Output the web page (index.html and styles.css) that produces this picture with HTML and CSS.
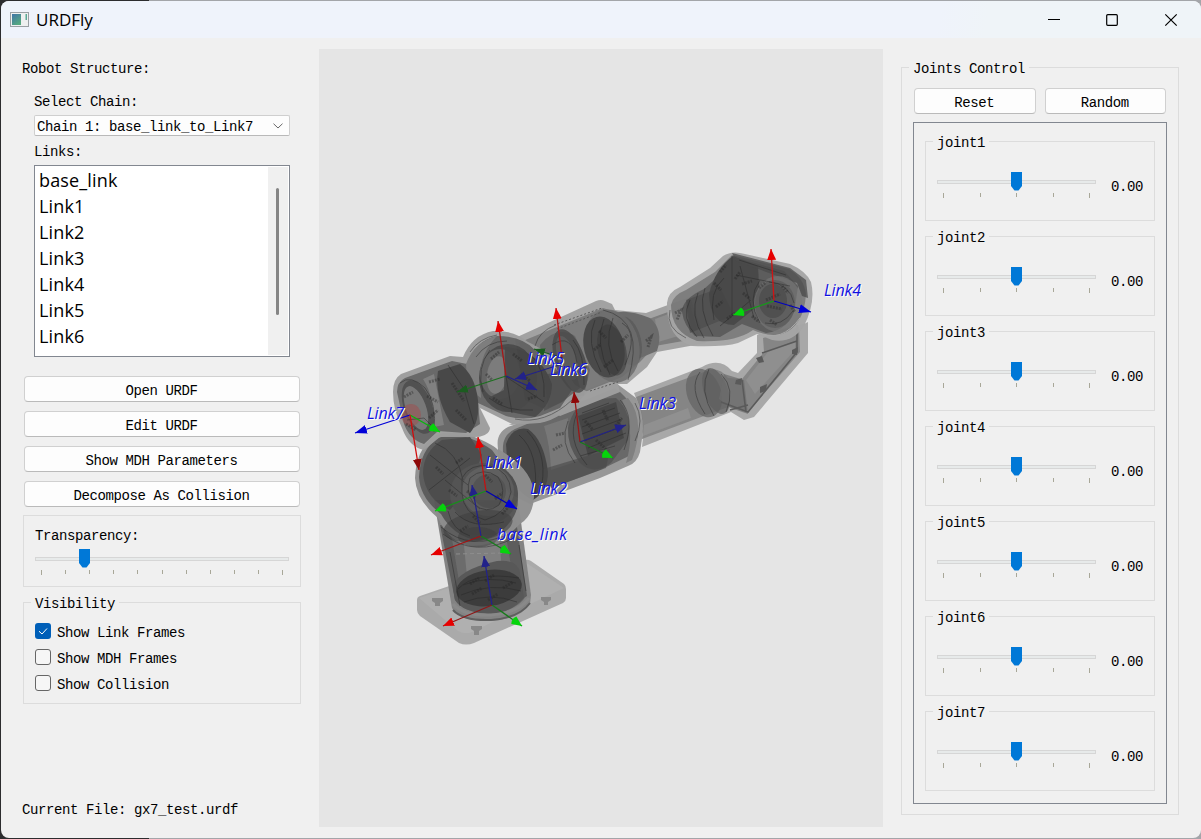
FILE: index.html
```html
<!DOCTYPE html>
<html lang="en">
  <head>
    <meta charset="UTF-8" />
    <meta name="viewport" content="width=device-width, initial-scale=1.0" />
    <title>URDFly</title>
    <link rel="stylesheet" href="styles.css">
  </head>
  <body>
    <div class="window">
      <header class="titlebar">
        <svg class="app-icon" width="19" height="15" viewBox="0 0 19 15">
          <defs>
            <linearGradient id="iconFill" x1="0" y1="0" x2="0.6" y2="1">
              <stop offset="0" stop-color="#3f74a8" />
              <stop offset="1" stop-color="#55a980" />
            </linearGradient>
          </defs>
          <rect x="0.5" y="0.5" width="18" height="14" fill="#eef0f0" stroke="#9aa0a4" />
          <rect x="2" y="2" width="9" height="11" fill="url(#iconFill)" />
          <rect x="15.5" y="2" width="1.5" height="6" fill="#5aa895" />
        </svg>
        <span class="title">URDFly</span>
        <svg class="window-buttons" width="130" height="14" viewBox="0 0 130 14">
          <path d="M0 6.5H12" />
          <rect x="58.7" y="1.7" width="10.6" height="10.6" rx="1" />
          <path d="M117.3 1.3L128.7 12.7M128.7 1.3L117.3 12.7" />
        </svg>
      </header>

      <main>
        <aside class="left">
          <div class="label">Robot Structure:</div>
          <div class="structure">
            <div class="label chain-label">Select Chain:</div>
            <div class="combo">
              <span>Chain 1: base_link_to_Link7</span>
              <svg width="10" height="6" viewBox="0 0 10 6"><path d="M0.5 0.7L5 5L9.5 0.7" /></svg>
            </div>
            <div class="label links-label">Links:</div>
            <div class="list">
              <ul>
                <li>base_link</li>
                <li>Link1</li>
                <li>Link2</li>
                <li>Link3</li>
                <li>Link4</li>
                <li>Link5</li>
                <li>Link6</li>
              </ul>
              <div class="scrollbar"><div class="thumb"></div></div>
            </div>
          </div>

          <div class="actions">
            <button>Open URDF</button>
            <button>Edit URDF</button>
            <button>Show MDH Parameters</button>
            <button>Decompose As Collision</button>
          </div>

          <div class="transparency">
            <div class="label">Transparency:</div>
            <svg class="slider" width="254" height="26" viewBox="0 0 254 26">
              <rect class="track" x="0.5" y="8.5" width="253" height="3" />
              <path class="ticks" d="M6.5 21v5M30.5 21v4M54.5 21v4M78.5 21v4M102.5 21v4M127.5 21v4M151.5 21v4M175.5 21v4M199.5 21v4M223.5 21v4M247.5 21v5" />
              <path class="handle" d="M44 0h11v14l-3.5 4.5h-4L44 14z" />
            </svg>
          </div>

          <fieldset class="visibility">
            <legend>Visibility</legend>
            <label><span class="check on"><svg width="16" height="16" viewBox="0 0 16 16"><path d="M4 8.2L7 11L12 5.5" /></svg></span><span class="check-text">Show Link Frames</span></label>
            <label><span class="check"></span><span class="check-text">Show MDH Frames</span></label>
            <label><span class="check"></span><span class="check-text">Show Collision</span></label>
          </fieldset>

          <div class="label current-file">Current File: gx7_test.urdf</div>
        </aside>

        <svg class="viewport" width="564" height="778" viewBox="319 49 564 778">
          <defs>
            <marker id="red" viewBox="0 0 11 10" refX="11" refY="5" markerWidth="11" markerHeight="10" markerUnits="userSpaceOnUse" orient="auto"><path d="M0 0.5L11 5L0 9.5z" fill="#e60000" /></marker>
            <marker id="maroon" viewBox="0 0 11 10" refX="11" refY="5" markerWidth="11" markerHeight="10" markerUnits="userSpaceOnUse" orient="auto"><path d="M0 0.5L11 5L0 9.5z" fill="#8e0808" /></marker>
            <marker id="lime" viewBox="0 0 12 10" refX="12" refY="5" markerWidth="12" markerHeight="10" markerUnits="userSpaceOnUse" orient="auto"><path d="M2 0.5Q-1 5 2 9.5L12 5z" fill="#06d40c" /></marker>
            <marker id="green" viewBox="0 0 11 10" refX="11" refY="5" markerWidth="11" markerHeight="10" markerUnits="userSpaceOnUse" orient="auto"><path d="M0 1L11 5L0 9z" fill="#1c5c20" /></marker>
            <marker id="blue" viewBox="0 0 12 10" refX="12" refY="5" markerWidth="12" markerHeight="10" markerUnits="userSpaceOnUse" orient="auto"><path d="M0 0.5L12 5L0 9.5z" fill="#0000d8" /></marker>
            <marker id="navy" viewBox="0 0 11 10" refX="11" refY="5" markerWidth="11" markerHeight="10" markerUnits="userSpaceOnUse" orient="auto"><path d="M0 0.5L11 5L0 9.5z" fill="#22228a" /></marker>
          </defs>

          <!-- base plate and column -->
          <g class="solid">
            <path fill="#a8a8a8" d="M417 600Q417 597 420 596L525 560Q528 559 531 561L564 584Q566 586 566 589V598Q566 601 563 603L474 643Q466 646 459 643L420 616Q417 613 417 610z" />
            <path fill="#bababa" d="M419 598L525 562L564 588L472 632Q465 635 458 631z" opacity="0.35" />
            <g fill="#858585">
              <path d="M432 598h11v3l-3 2v3h-5v-3l-3-2z" />
              <path d="M541 597h10v3l-3 2v3h-4v-3l-3-2z" />
              <path d="M471 626h11v3l-3 2v4h-5v-4l-3-2z" />
            </g>
            <path fill="#808080" d="M434 500L452 608Q458 621 491 621Q520 619 530 604L531 595L518 500z" />
            <path fill="#686868" d="M440 505L455 600Q464 613 490 613Q518 611 526 596L513 500z" />
            <path fill="#7b7b7b" d="M463 535L470 608L505 607L499 535z" />
            <path fill="#585858" d="M505 530L517 602L527 596L516 520zM440 525L455 600L463 605L450 527z" />
            <path fill="#535353" d="M453 588Q456 570 497 561Q518 559 520 573L524 598Q510 614 488 614Q462 612 455 600z" />
            <ellipse fill="#363636" cx="489" cy="588" rx="33" ry="18" transform="rotate(-8 489 588)" />
            <path fill="none" stroke="#868686" stroke-width="3" d="M453 604Q463 616 491 615Q519 613 529 598" />
            <path fill="none" stroke="#5a5a5a" stroke-width="2" d="M453 610Q463 621 491 620Q519 618 530 603" />
          </g>

          <!-- upper arm housing -->
          <g class="solid">
            <path fill="#949494" d="M497 447Q497 432 508 427L560 408L580 392L612 380L636 398Q645 410 643 432L640 452Q637 463 628 466L600 478L530 504L510 494Q500 482 497 447z" />
            <path fill="#646464" d="M503 446Q504 434 515 429L580 402L615 388Q638 404 638 436L631 455L600 470L530 496L512 484Q502 470 503 446z" />
            <path fill="#7c7c7c" d="M628 398Q646 420 632 460L626 463Q636 430 622 400z" />
            <path fill="#404040" d="M506 444Q512 426 528 429Q544 440 548 472Q548 491 533 500Q516 492 508 472z" />
            <path fill="#747474" d="M544 426L568 418Q566 440 578 461L551 470Q550 445 544 426z" />
            <path fill="#525252" d="M568 428Q573 404 594 399L616 398Q633 412 628 440L611 463Q594 476 580 463Q567 446 568 428z" />
            <path fill="#3a3a3a" d="M578 416L616 402L624 438L588 456z" opacity="0.75" />
            <path fill="#424242" d="M540 470L610 449L606 468L535 494z" opacity="0.6" />
          </g>

          <!-- shoulder -->
          <g class="solid">
            <path fill="#8e8e8e" d="M415 478Q416 450 434 436Q460 425 498 449Q535 470 534 497Q533 516 520 524Q500 546 470 546Q448 541 438 518Q416 500 415 478z" />
            <path fill="#585858" d="M419 477Q420 450 438 438Q462 429 492 450L516 484Q522 508 510 522Q496 541 474 540Q452 534 441 514Q420 498 419 477z" />
            <path fill="#474747" d="M423 474Q423 452 442 440L470 437L482 455L470 486L450 510Q426 500 423 474z" />
            <ellipse fill="#4f4f4f" cx="484" cy="494" rx="34" ry="31" />
            <ellipse fill="#646464" cx="488" cy="491" rx="26" ry="25" opacity="0.6" />
            <ellipse fill="#4a4a4a" cx="489" cy="491" rx="17" ry="17" opacity="0.7" />
            <ellipse fill="#3f3f3f" cx="478" cy="526" rx="35" ry="15" opacity="0.6" transform="rotate(-10 478 526)" />
            <ellipse fill="#3b3b3b" cx="478" cy="537" rx="20" ry="10" opacity="0.5" />
            <path fill="none" stroke="#8f8f8f" stroke-dasharray="4 3" d="M456 554L502 553" />
          </g>

          <!-- lower tube and elbow bracket -->
          <g class="solid">
            <path fill="#a6a6a6" d="M634 393L702 367Q720 357 732 371L738 373L757 353V335L804 324L808 322V353L754 417L744 420L731 412L642 447Q646 420 634 393z" />
            <path fill="#828282" d="M636 397L704 372Q718 365 728 378L742 379L764 352L763 338L799 327L800 352L749 411L728 407L642 439Q645 418 636 397z" />
            <path fill="#8d8d8d" d="M644 425L688 408L691 418L643 436z" />
            <ellipse fill="#606060" cx="704" cy="393" rx="17" ry="25" transform="rotate(-20 704 393)" opacity="0.75" />
            <ellipse fill="#585858" cx="716" cy="391" rx="12" ry="24" transform="rotate(-20 716 391)" opacity="0.7" />
            <path fill="#686868" d="M724 374L744 380L748 414L731 408L719 399z" opacity="0.7" />
            <path fill="#8c8c8c" d="M746 380L768 352L795 342V350L755 394z" />
            <path fill="none" stroke="#555" d="M721 402L748 412L797 352V325M762 353L797 341M742 380L746 412M730 410L748 405" stroke-width="1.6" />
            <path fill="#555" d="M756 358l6-2 2 6-5 1zM760 387l7-3-1 7-6 2zM792 350l6-3-1 8-5-1zM736 380l6-2-1 7-6-1z" />
          </g>

          <!-- forearm tube -->
          <g class="solid">
            <path fill="#a0a0a0" d="M515 338L596 301Q601 299 605 301L612 304L615 310L646 313L690 297L706 343L657 352L647 367L627 384L618 384L620 392L560 416L525 400z" />
            <path fill="#787878" d="M518 343L603 308L625 315L646 320L690 304L700 338L655 346L640 362L622 377L560 402z" />
            <path fill="#898989" d="M655 319L687 307L692 332L658 342z" />
            <path fill="#636363" d="M540 345Q556 325 575 336L590 370L584 395L548 408z" />
            <path fill="#676767" d="M612 314Q625 308 650 318Q664 330 657 351L628 363L612 372z" />
            <ellipse fill="#4e4e4e" cx="628" cy="341" rx="13" ry="25" opacity="0.6" transform="rotate(-14 628 341)" />
            <ellipse fill="#686868" cx="612" cy="346" rx="27" ry="37" transform="rotate(-14 612 346)" opacity="0.85" />
            <ellipse fill="#444" cx="604" cy="347" rx="20" ry="31" transform="rotate(-14 604 347)" />
            <ellipse fill="#363636" cx="612" cy="350" rx="14" ry="26" transform="rotate(-14 612 350)" opacity="0.6" />
            <path fill="none" stroke="#555" stroke-dasharray="2 2" d="M554 325L602 308M557 329L602 312M590 391L618 382" />
          </g>

          <!-- elbow head -->
          <g class="solid">
            <path fill="#a6a6a6" d="M667 303Q668 292 680 287L710 268L723 256Q732 250 745 254L790 264Q806 271 811 282Q816 302 804 326Q792 344 772 340L757 334L738 343Q725 347 692 346Q666 338 667 303z" />
            <path fill="#7a7a7a" d="M671 305Q673 295 686 290L715 272L732 255L789 269Q804 278 806 294Q804 326 782 334Q768 337 753 330Q735 343 697 341Q671 332 671 305z" />
            <path fill="#585858" d="M682 312Q682 299 704 289L722 273L733 257L784 271L798 286L795 307Q790 330 766 333L742 324L720 337L695 336Q684 326 682 312z" />
            <path fill="#434343" d="M709 294Q715 269 733 256L758 266L760 304L734 325Q710 325 709 294z" />
            <path fill="#3e3e3e" d="M686 300L720 288L734 315L690 333z" opacity="0.5" />
            <path fill="#444" d="M732 253L790 268L806 280L808 298L802 296L797 283L736 261z" opacity="0.75" />
            <ellipse fill="#767676" cx="778" cy="304" rx="24" ry="28" opacity="0.6" />
            <ellipse fill="#565656" cx="775" cy="304" rx="20" ry="24" opacity="0.8" />
            <ellipse fill="#404040" cx="773" cy="301" rx="14" ry="17" opacity="0.6" />
            <path fill="none" stroke="#a9a9a9" d="M758 333Q782 343 800 318" />
            <path fill="none" stroke="#303030" d="M732 256V316" opacity="0.7" />
          </g>

          <!-- wrist -->
          <g class="solid">
            <path fill="#9d9d9d" d="M393 392Q393 379 401 374L450 356L463 357Q472 335 493 331Q514 330 528 342Q556 354 575 385L588 392Q560 420 540 423L510 425L478 409L490 412L490 430Q486 438 471 437L440 437L424 450Q409 447 402 428Q393 410 393 392z" />
            <path fill="#646464" d="M397 392Q397 382 405 378L452 361L467 364Q476 340 497 336Q522 336 535 350Q556 365 572 390L560 408L540 416Q523 421 506 416L478 403L480 424L466 433L438 431L424 444Q410 440 404 424z" />
            <path fill="#7a7a7a" d="M466 364Q474 342 497 336Q481 352 480 375L481 398L467 388z" />
            <path fill="#7c7c7c" d="M423 379L434 374L444 425L434 427Q435 398 423 379z" />
            <ellipse fill="#4b4b4b" cx="418" cy="407" rx="14" ry="28" transform="rotate(-20 418 407)" />
            <ellipse fill="#747474" cx="416" cy="408" rx="10" ry="23" transform="rotate(-20 416 408)" />
            <path fill="#424242" d="M438 371L460 364Q475 375 478 400Q480 421 470 433L450 422Q434 395 438 371z" />
            <ellipse fill="#464646" cx="508" cy="378" rx="29" ry="34" />
            <ellipse fill="#606060" cx="500" cy="374" rx="20" ry="25" />
            <ellipse fill="#787878" cx="497" cy="375" rx="10" ry="19" transform="rotate(8 497 375)" />
            <path fill="#424242" d="M505 347Q540 350 552 384Q552 404 535 417L505 411L490 397L504 390z" opacity="0.9" />
            <ellipse fill="#474747" cx="570" cy="361" rx="15" ry="33" transform="rotate(-18 570 361)" opacity="0.8" />
            <ellipse fill="#606060" cx="567" cy="358" rx="9" ry="23" transform="rotate(-18 567 358)" opacity="0.8" />
            <path fill="#464646" d="M545 375L574 367L580 388L562 402L544 411z" opacity="0.6" />
            <ellipse fill="#a04646" cx="411" cy="415" rx="10" ry="11" opacity="0.5" />
          </g>

          <path fill="#e5e5e5" d="M480 408L512 424Q498 427 497 437L498 450Q490 441 480 437Q490 436 490 428z" />

          <!-- mesh edges and bolts -->
          <g class="edges">
            <path d="M470 352Q479 338 497 335M476 357Q487 341 507 341M483 392Q476 368 490 350M400 383Q411 374 425 388Q437 403 434 432M448 365L464 389L474 424M437 431L424 418L407 420" />
            <path d="M505 376L544 402M506 376L512 413M489 398Q506 412 533 410M530 354Q546 369 544 397M552 345Q572 331 577 363M573 340Q585 354 584 385M535 346Q539 331 556 325M515 419Q545 425 572 400" />
            <path d="M595 320Q585 341 601 372M604 319Q594 342 610 375M613 318Q602 345 618 371M622 323Q639 333 625 365M603 310Q646 320 628 380" />
            <path d="M690 300Q680 318 697 337M698 293Q689 315 704 338M705 288Q697 309 713 336M724 278Q708 292 714 320M736 275L790 286M740 266L754 318M720 326L751 300M760 280Q746 299 760 323M769 282Q790 284 794 303M765 323Q782 327 793 311M739 260L786 275M670 310Q665 328 686 338" />
            <path d="M582 413L609 403M582 420L615 408M582 427L620 413M582 434L622 419M584 441L624 426M588 448L626 433M580 456L615 446M519 435Q539 452 535 493M527 431Q547 452 542 484M568 421Q559 443 575 463M577 413Q566 440 587 465M620 400Q636 417 624 450" />
            <path d="M435 443Q458 452 463 480M429 490L470 458M430 455L468 485M445 480L480 509M448 511Q452 530 470 536M455 512Q471 530 504 522M462 478Q470 463 490 466Q510 471 511 492Q507 514 485 520Q463 514 462 493zM470 478Q483 466 498 477Q507 490 499 505Q486 515 474 504Q465 492 470 478z" />
            <path d="M441 527Q470 553 514 532M443 534Q475 559 516 537M450 552L460 606M519 545L526 591M458 589Q475 571 519 578M461 595Q490 582 521 591M464 602Q490 592 517 602M463 585Q488 575 516 583" />
            <path d="M700 372Q688 388 705 414M709 369Q698 390 714 416M721 374Q736 389 726 412M635 403Q645 420 635 441" />
          </g>
          <g class="bolts">
            <path d="M429 382L440 379M427 396L438 402M429 418L438 410M404 397L413 392M406 424L416 430M491 359L499 352M486 374L492 380M493 398L502 404M513 354L522 361M521 374L530 381M528 399L537 396M452 383L464 401M456 410L466 420" />
            <path d="M456 463L463 458M436 467L443 474M449 490L457 496M467 491L475 498M485 475L492 482M495 499L502 493M473 516L480 523M502 514L508 507M460 531L468 526" />
            <path d="M714 283L721 290M735 279L740 272M743 293L750 299M716 307L723 301M727 319L735 313M752 316L759 322M759 288L766 282M782 286L788 293M790 305L795 312M770 320L777 325M766 300L780 294M767 306L782 309M720 272L726 265M742 284L752 281" />
            <path d="M472 594L482 588M488 600L498 594M503 588L513 582M485 581L494 575M470 584L479 578M599 331L606 338M594 350L601 344M604 367L613 360M621 342L628 335M646 341L651 337L648 347M675 313L681 310L677 320M585 421L593 430M603 410L608 421M616 426L622 418M596 440L606 449M553 450L562 445M556 435L565 433" />
          </g>

          <!-- link frames -->
          <g class="axes">
            <path d="M492 605L443 626" stroke="#8e1717" marker-end="url(#red)" />
            <path d="M492 605L522 626" stroke="#167b1a" marker-end="url(#lime)" />
            <path d="M492 605L484 556" stroke="#22228a" marker-end="url(#navy)" />
            <path d="M481 536L431 555" stroke="#a51212" marker-end="url(#red)" />
            <path d="M481 536L511 554" stroke="#167b1a" marker-end="url(#lime)" />
            <path d="M481 536L472 485" stroke="#22228a" marker-end="url(#navy)" />
            <path d="M486 491L478 437" stroke="#c41111" marker-end="url(#red)" />
            <path d="M486 491L435 511" stroke="#16901a" marker-end="url(#lime)" />
            <path d="M486 491L517 509" stroke="#0000b0" marker-end="url(#blue)" />
            <path d="M580 442L574 392" stroke="#991616" marker-end="url(#maroon)" />
            <path d="M580 442L626 425" stroke="#22228a" marker-end="url(#navy)" />
            <path d="M580 442L613 458" stroke="#167b1a" marker-end="url(#lime)" />
            <path d="M774 301L771 249" stroke="#d01313" marker-end="url(#red)" />
            <path d="M774 301L733 315" stroke="#139e17" marker-end="url(#lime)" />
            <path d="M774 301L811 312" stroke="#0000c0" marker-end="url(#blue)" />
            <path d="M506 376L498 321" stroke="#a81717" marker-end="url(#red)" />
            <path d="M506 376L457 392" stroke="#1c701f" marker-end="url(#green)" />
            <path d="M506 376L537 390" stroke="#22228a" marker-end="url(#navy)" />
            <path d="M562 358L556 308" stroke="#b51717" marker-end="url(#red)" />
            <path d="M562 358L534 349" stroke="#1c5c20" marker-end="url(#green)" />
            <path d="M562 364L515 379" stroke="#22228a" marker-end="url(#navy)" />
            <path d="M410 415L355 433" stroke="#0000d8" marker-end="url(#blue)" />
            <path d="M410 415L440 432" stroke="#06b80c" marker-end="url(#lime)" />
            <path d="M410 415L419 470" stroke="#d00b0b" marker-end="url(#maroon)" />
          </g>

          <g class="names">
            <text x="485" y="468" textLength="37">Link1</text>
            <text x="530" y="494" textLength="37">Link2</text>
            <text x="639" y="409" textLength="37">Link3</text>
            <text x="824" y="296" textLength="37">Link4</text>
            <text x="527" y="364" textLength="37">Link5</text>
            <text x="550" y="375" textLength="37">Link6</text>
            <text x="367" y="419" textLength="37">Link7</text>
            <text x="497" y="540" textLength="70">base_link</text>
          </g>
        </svg>

        <fieldset class="joints">
          <legend>Joints Control</legend>
          <div class="joint-buttons">
            <button>Reset</button>
            <button>Random</button>
          </div>
          <div class="joint-list" id="jointList"></div>
        </fieldset>
      </main>
    </div>

    <script>
      const jointList = document.querySelector("#jointList");

      for (let i = 1; i <= 7; i++) {
        const joint = document.createElement("fieldset");
        joint.className = "joint";
        joint.innerHTML = `
          <legend>joint${i}</legend>
          <svg class="slider" width="159" height="26" viewBox="0 0 159 26">
            <rect class="track" x="0.5" y="8.5" width="158" height="3" />
            <path class="ticks" d="M6.5 21v5M43.5 21v4M79.5 21v4M116.5 21v4M152.5 21v5" />
            <path class="handle" d="M74 0h11v14l-3.5 4.5h-4L74 14z" />
          </svg>
          <span class="value">0.00</span>`;
        jointList.appendChild(joint);
      }
    </script>
  </body>
</html>
```

FILE: styles.css
```css
* {
  box-sizing: border-box;
}

body {
  margin: 0;
  height: 839px;
  padding: 1px 0 1px 1px;
  overflow: hidden;
  background: linear-gradient(90deg, #2c2c2e 149px, #a3a5a9 149px);
  font-family: "Liberation Mono", monospace;
  font-size: 14px;
  letter-spacing: -0.4px;
  line-height: 16px;
  color: #000;
}

.window {
  height: 837px;
  border-radius: 8px;
  overflow: hidden;
  background-color: #f0f0f0;
}

.titlebar {
  display: flex;
  align-items: center;
  height: 37px;
  padding: 0 23px 0 9px;
  background: linear-gradient(100deg, #eff3fb 78%, #eff4f8 82%);
}

.title {
  flex: 1;
  margin-left: 7px;
  font-family: "Open Sans", sans-serif;
  font-size: 17px;
  letter-spacing: 0;
}

.window-buttons {
  fill: none;
  stroke: #000;
  stroke-width: 1.2;
}

main {
  display: flex;
  height: 800px;
}

.left {
  display: flex;
  flex-direction: column;
  width: 318px;
  padding: 22px 18px 20px 21px;
}

.label {
  height: 16px;
  line-height: 18px;
  white-space: nowrap;
}

.structure {
  padding: 17px 11px 0 12px;
}

.combo {
  display: flex;
  align-items: center;
  justify-content: space-between;
  height: 21px;
  margin-top: 6px;
  padding: 0 6px 0 2px;
  background-color: #fdfdfd;
  border: 1px solid #cfcfcf;
  border-bottom-color: #b9b9b9;
  border-radius: 2px;
  white-space: nowrap;
}

.combo span {
  padding-top: 2px;
}

.combo svg {
  fill: none;
  stroke: #666;
}

.links-label {
  margin-top: 7px;
}

.list {
  display: flex;
  height: 192px;
  margin-top: 6px;
  padding: 1px;
  background-color: #fff;
  border: 1px solid #828790;
}

.list ul {
  flex: 1;
  margin: 0;
  padding: 0 0 0 3px;
  list-style: none;
  font-family: "Open Sans", sans-serif;
  font-size: 18px;
  letter-spacing: 0.15px;
}

.list li {
  height: 26px;
  line-height: 26px;
}

.scrollbar {
  width: 20px;
  padding: 21px 0 0 8px;
  background-color: #f0f0f0;
}

.thumb {
  width: 3px;
  height: 127px;
  border-radius: 2px;
  background-color: #858585;
}

button {
  height: 26px;
  padding: 3px 1px 0 0;
  font: inherit;
  letter-spacing: inherit;
  color: inherit;
  background-color: #fdfdfd;
  border: 1px solid #d0d0d0;
  border-bottom-color: #bababa;
  border-radius: 4px;
}

.actions {
  display: flex;
  flex-direction: column;
  gap: 9px;
  margin: 19px 1px 0 2px;
}

.transparency {
  height: 72px;
  margin: 8px 0 0 1px;
  padding: 11px;
  border: 1px solid #dcdcdc;
}

.slider {
  display: block;
}

.transparency .slider {
  margin-top: 6px;
}

.track {
  fill: #e7eaea;
  stroke: #d6d6d6;
}

.ticks {
  stroke: #a8a798;
}

.handle {
  fill: #0078d7;
}

fieldset {
  min-width: 0;
  margin: 0;
  border: 1px solid #dcdcdc;
}

legend {
  height: 15px;
  padding: 0 4px;
  line-height: 19px;
}

.visibility {
  height: 109px;
  margin: 8px 0 0 1px;
  padding: 13px 11px 0 7px;
}

.visibility label {
  display: flex;
  gap: 6px;
  height: 16px;
  margin: 0 0 10px 4px;
}

.check {
  width: 16px;
  height: 16px;
  background-color: #f6f6f6;
  border: 1px solid #666;
  border-radius: 3px;
}

.check-text {
  line-height: 20px;
}

.check.on {
  border: none;
  background-color: #005fb8;
}

.check svg {
  display: block;
  fill: none;
  stroke: #fff;
}

.current-file {
  margin-top: auto;
  line-height: 16px;
}

.viewport {
  flex: none;
  margin-top: 11px;
  background-color: #e5e5e5;
}

.solid {
  opacity: 0.96;
}

.edges {
  fill: none;
  stroke: #262626;
  stroke-width: 1;
  opacity: 0.45;
}

.bolts {
  fill: none;
  stroke: #252525;
  stroke-width: 3;
  stroke-dasharray: 2 1;
  opacity: 0.4;
}

.axes {
  fill: none;
  stroke-width: 1.3;
}

.names {
  font-family: "Open Sans", sans-serif;
  font-size: 16px;
  font-style: italic;
  letter-spacing: 0;
  fill: #1010e0;
  text-shadow: 1px 1px 0 #fff;
}

.joints {
  width: 278px;
  height: 755px;
  margin: 22px 0 0 18px;
  padding: 13px 11px 0 7px;
}

.joint-buttons {
  display: flex;
  gap: 9px;
  margin: 0 1px 8px 5px;
}

.joint-buttons button {
  flex: 1;
}

.joint-list {
  height: 682px;
  margin-left: 4px;
  padding: 11px;
  border: 1px solid #828790;
}

.joint {
  height: 87px;
  margin-bottom: 8px;
  padding: 0 11px 0 7px;
}

.joint .slider {
  float: left;
  margin: 23px 0 0 4px;
}

.value {
  float: right;
  margin-top: 30px;
}
```
